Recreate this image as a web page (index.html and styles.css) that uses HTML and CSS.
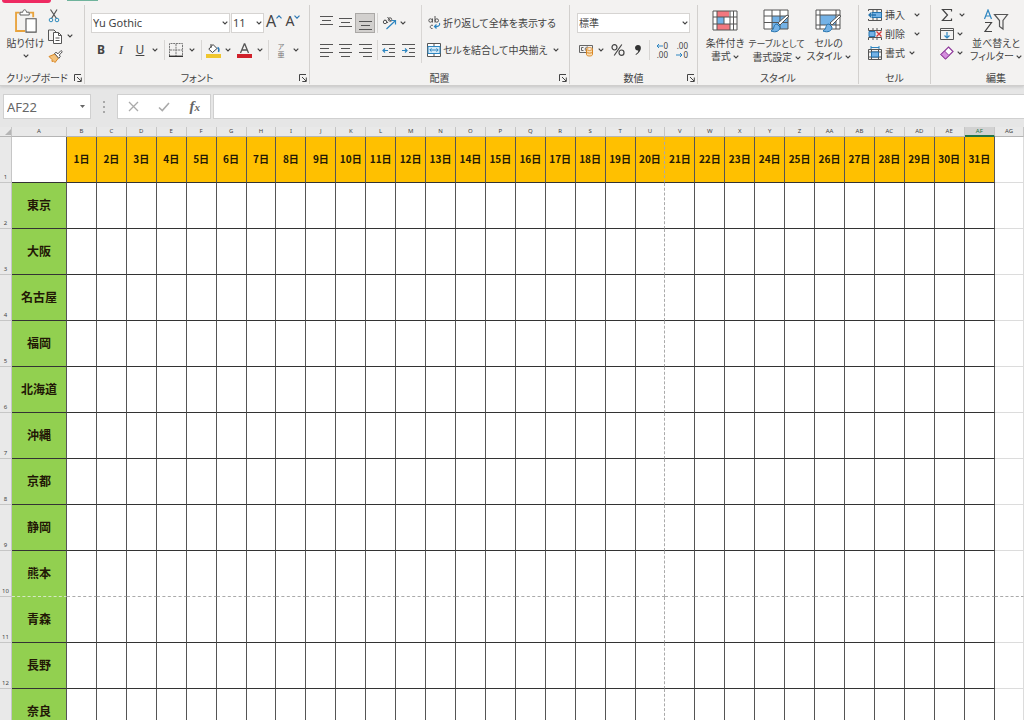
FILE: index.html
```html
<!DOCTYPE html>
<html lang="ja">
<head>
<meta charset="utf-8">
<meta name="viewport" content="width=device-width, initial-scale=1">
<title>スプレッドシート</title>
<link rel="stylesheet" href="styles.css">
</head>
<body>
<svg class="sprite" aria-hidden="true">
  <symbol id="chev" viewBox="0 0 6 4"><path d="M.7.7 3 3 5.300.7" fill="none" stroke="#444" stroke-width="1.2"/></symbol>
  <symbol id="launch" viewBox="0 0 8 8"><path d="M.5 7V.5H7M3 3l4 4M7.300 3.500v4h-4" fill="none" stroke="#444"/></symbol>
</svg>

<header class="ribbon">
  <div class="tabs"><span class="tab-red"></span><span class="tab-green"></span></div>
  <div class="groups">

    <section class="group clipboard">
      <div class="body">
        <button class="big" type="button">
          <svg width="24" height="26" viewBox="0 0 24 26" fill="none"><path d="M5 4H1.200v19.800H11M16 4h3.800v5" stroke="#e8a33d" stroke-width="2"/><path d="M5.500 6.500v-3h3C8.500 0 12.500 0 12.500 3.500h3v3z" fill="#fff" stroke="#555"/><path d="M12 10.500h11V25H12z" fill="#fff" stroke="#555" stroke-width="1.200"/></svg>
          <span class="lines">貼り付け</span>
          <svg class="chev"><use href="#chev"/></svg>
        </button>
        <div class="clip-tools">
          <button type="button" aria-label="切り取り"><svg width="12" height="14" viewBox="0 0 12 14" fill="none"><path d="M2.500.5 8.500 9.500M9 .5 3.500 9.500" stroke="#555" stroke-width="1.200"/><circle cx="3" cy="11" r="1.800" stroke="#2e8bbd"/><circle cx="9" cy="11" r="1.800" stroke="#2e8bbd"/></svg></button>
          <button type="button" aria-label="コピー"><svg width="15" height="15" viewBox="0 0 15 15" fill="none" stroke="#555"><path d="M5 11.500H.5V1H6l2 2"/><path d="M5.500 3.500h5l3 3v8h-8z" fill="#fff"/><path d="M10.500 3.500v3h3M7.500 9h4M7.500 11.500h4"/></svg><svg class="chev"><use href="#chev"/></svg></button>
          <button type="button" aria-label="書式のコピー"><svg width="15" height="13" viewBox="0 0 15 13"><path d="M1 6.500 7 4l3.500 4L7 12.500 5.500 11 4 11.500 4 9.500z" fill="#f3c27c" stroke="#d98723"/><path d="M6.500 3.500 8 2.300l2 1.500L13 .5l1.300 1.200-3 3.300 1 1.500-1.500 1.800z" fill="#fff" stroke="#555"/></svg></button>
        </div>
      </div>
      <footer><span>クリップボード</span><button class="launch" type="button" aria-label="クリップボードの設定"><svg width="8" height="8"><use href="#launch"/></svg></button></footer>
    </section>

    <section class="group font">
      <div class="body rows">
        <div class="row font-top">
          <label class="combo"><select aria-label="フォント名"><option>Yu Gothic</option></select><svg class="chev"><use href="#chev"/></svg></label>
          <label class="combo"><select aria-label="フォントサイズ"><option>11</option></select><svg class="chev"><use href="#chev"/></svg></label>
          <button type="button" class="grow" aria-label="拡大">A<svg width="6" height="4" viewBox="0 0 6 4"><path d="M.5 3.300 3 .8l2.500 2.500" fill="none" stroke="#2e79b5" stroke-width="1.200"/></svg></button>
          <button type="button" class="shrink" aria-label="縮小">A<svg width="6" height="4" viewBox="0 0 6 4"><path d="M.5.7 3 3.200 5.500.7" fill="none" stroke="#2e79b5" stroke-width="1.200"/></svg></button>
        </div>
        <div class="row font-tools">
          <button type="button"><b>B</b></button>
          <button type="button"><i>I</i></button>
          <button type="button"><u>U</u></button>
          <button type="button" aria-label="下線"><svg class="chev"><use href="#chev"/></svg></button>
          <span class="sep"></span>
          <button type="button" aria-label="罫線"><svg width="14" height="14" viewBox="0 0 14 14" fill="none"><path d="M.5 13V.5h13V13M7 1v12M1 7h12" stroke="#777" stroke-dasharray="2 .7"/><path d="M0 13.300h14" stroke="#333" stroke-width="1.400"/></svg></button>
          <button type="button" aria-label="罫線の種類"><svg class="chev"><use href="#chev"/></svg></button>
          <span class="sep"></span>
          <button type="button" aria-label="塗りつぶし"><svg width="15" height="15" viewBox="0 0 15 15"><path d="M7 1.500 11 5.500 6.500 9.500 2.800 6.200zM5 1v4" fill="#fff" stroke="#444"/><path d="M11.500 4.500c2 1 1.500 3 1 4.500" fill="none" stroke="#2e79b5" stroke-width="1.500"/><path d="M0 11h15v4H0z" fill="#efc62e"/></svg></button>
          <button type="button" aria-label="塗りつぶしの色"><svg class="chev"><use href="#chev"/></svg></button>
          <button type="button" aria-label="フォントの色"><svg width="15" height="15" viewBox="0 0 15 15"><path d="M3.500 10 7.300 1h.5l3.700 9M5 7h5" fill="none" stroke="#555" stroke-width="1.300"/><path d="M0 11h15v4H0z" fill="#d0202a"/></svg></button>
          <button type="button" aria-label="文字の色"><svg class="chev"><use href="#chev"/></svg></button>
          <span class="sep"></span>
          <button type="button" class="ruby"><span>ア</span><span>亜</span></button>
          <button type="button" aria-label="ふりがな"><svg class="chev"><use href="#chev"/></svg></button>
        </div>
      </div>
      <footer><span>フォント</span><button class="launch" type="button" aria-label="フォントの設定"><svg width="8" height="8"><use href="#launch"/></svg></button></footer>
    </section>

    <section class="group align">
      <div class="body">
        <div class="align-left rows">
          <div class="row align-top">
            <button type="button" aria-label="上揃え"><svg width="13" height="14" viewBox="0 0 13 14" stroke="#555"><path d="M0 .5h13M2 4.500h9M0 8.500h13"/></svg></button>
            <button type="button" aria-label="中央揃え(縦)"><svg width="13" height="14" viewBox="0 0 13 14" stroke="#555"><path d="M0 2.500h13M2 6.500h9M0 10.500h13"/></svg></button>
            <button type="button" class="on" aria-label="下揃え" aria-pressed="true"><svg width="13" height="14" viewBox="0 0 13 14" stroke="#555"><path d="M0 5.500h13M2 9.500h9M0 13.500h13"/></svg></button>
            <span class="sep"></span>
            <button type="button" aria-label="方向"><svg width="15" height="14" viewBox="0 0 15 14" fill="none"><g stroke="#555"><circle cx="3" cy="6" r="1.700"/><path d="M3 3.500l3 3.500M5.500 1l3.500 4.500"/><circle cx="8" cy="3.500" r="1.700"/></g><path d="M4.500 13 13 5M9.500 4.500h4v4" stroke="#2e86c1" stroke-width="1.200"/></svg></button>
            <button type="button" aria-label="方向の種類"><svg class="chev"><use href="#chev"/></svg></button>
          </div>
          <div class="row align-bottom">
            <button type="button" aria-label="左揃え"><svg width="13" height="13" viewBox="0 0 13 13" stroke="#555"><path d="M0 .5h13M0 4.500h9M0 8.500h13M0 12.500h9"/></svg></button>
            <button type="button" aria-label="中央揃え"><svg width="13" height="13" viewBox="0 0 13 13" stroke="#555"><path d="M0 .5h13M2 4.500h9M0 8.500h13M2 12.500h9"/></svg></button>
            <button type="button" aria-label="右揃え"><svg width="13" height="13" viewBox="0 0 13 13" stroke="#555"><path d="M0 .5h13M4 4.500h9M0 8.500h13M4 12.500h9"/></svg></button>
            <span class="sep"></span>
            <button type="button" aria-label="インデントを減らす"><svg width="13" height="13" viewBox="0 0 13 13" fill="none" stroke="#555"><path d="M0 .5h13M7 4.500h6M7 8.500h6M0 12.500h13"/><path d="M6 6.500H1M3 4.500l-2 2 2 2" stroke="#2e86c1" stroke-width="1.200"/></svg></button>
            <button type="button" aria-label="インデントを増やす"><svg width="13" height="13" viewBox="0 0 13 13" fill="none" stroke="#555"><path d="M0 .5h13M7 4.500h6M7 8.500h6M0 12.500h13"/><path d="M0 6.500h5M3 4.500l2 2-2 2" stroke="#2e86c1" stroke-width="1.200"/></svg></button>
          </div>
        </div>
        <div class="align-right rows">
          <button type="button" class="wide row"><svg width="14" height="14" viewBox="0 0 14 14" fill="none"><g stroke="#555"><circle cx="3.500" cy="4.500" r="1.700"/><path d="M5.500 2.500v4M8 0v6.500M6 9.500c-3-1.500-4 3.500-.5 3"/><circle cx="9.800" cy="4.500" r="1.700"/></g><path d="M12.500 7c1 3-2 4-5 3.500M9.500 8.500l-2 2 2 2" stroke="#2e86c1" stroke-width="1.200"/></svg><span>折り返して全体を表示する</span></button>
          <button type="button" class="wide row"><svg width="14" height="14" viewBox="0 0 14 14" fill="none"><path d="M.5.5h13v13H.5z" fill="#fff" stroke="#555"/><path d="M1 3.500h12v7H1z" fill="#d6ebf8" stroke="#2e86c1"/><path d="M7 1v2M7 11v2" stroke="#555"/><path d="M3 7h8M4.500 5.300 2.800 7l1.700 1.700M9.500 5.300 11.200 7 9.500 8.700" stroke="#2e86c1"/></svg><span>セルを結合して中央揃え</span><svg class="chev end"><use href="#chev"/></svg></button>
        </div>
      </div>
      <footer><span>配置</span><button class="launch" type="button" aria-label="配置の設定"><svg width="8" height="8"><use href="#launch"/></svg></button></footer>
    </section>

    <section class="group number">
      <div class="body rows">
        <div class="row"><label class="combo full"><select aria-label="表示形式"><option>標準</option></select><svg class="chev"><use href="#chev"/></svg></label></div>
        <div class="row number-tools">
          <button type="button" aria-label="通貨"><svg width="15" height="14" viewBox="0 0 15 14" fill="none"><path d="M.5 2.500h13v7H.5z" stroke="#666"/><path d="M4.500 4.500h-2v3h2M9 4C5.500 3.500 5.500 8 8 8" stroke="#666"/><path d="M7.500 6v5.500c0 2 6 2 6 0V6" fill="#f9ddb3" stroke="#d98723"/><ellipse cx="10.500" cy="6" rx="3" ry="1.300" fill="#fff" stroke="#d98723"/><path d="M7.500 9c1 1.500 5 1.500 6 0" stroke="#d98723"/></svg></button>
          <button type="button" aria-label="通貨の種類"><svg class="chev"><use href="#chev"/></svg></button>
          <button type="button" aria-label="パーセント"><svg width="14" height="12" viewBox="0 0 14 12" fill="none" stroke="#444" stroke-width="1.200"><ellipse cx="3.500" cy="3.300" rx="2.500" ry="2.700"/><ellipse cx="10.500" cy="8.700" rx="2.500" ry="2.700"/><path d="M10.800.5 3.200 11.500"/></svg></button>
          <button type="button" aria-label="桁区切り"><svg width="8" height="12" viewBox="0 0 8 12"><path d="M4 1c4 0 4.300 6-2 10l-.5-.7C3.500 9 4.300 8 4.300 6.600 0 7 0 1 4 1z" fill="#333"/></svg></button>
          <span class="sep"></span>
          <button type="button" class="dec"><span><svg width="7" height="6" viewBox="0 0 7 6"><path d="M7 3H1M3 1 1 3l2 2" fill="none" stroke="#2e86c1"/></svg>0</span><span>.00</span></button>
          <button type="button" class="dec"><span>.00</span><span><svg width="7" height="6" viewBox="0 0 7 6"><path d="M0 3h6M4 1l2 2-2 2" fill="none" stroke="#2e86c1"/></svg>0</span></button>
        </div>
      </div>
      <footer><span>数値</span><button class="launch" type="button" aria-label="数値の設定"><svg width="8" height="8"><use href="#launch"/></svg></button></footer>
    </section>

    <section class="group styles">
      <div class="body">
        <button class="big" type="button">
          <svg width="26" height="22" viewBox="0 0 26 22" fill="none"><path d="M1 1h24v19H1z" fill="#fff"/><path d="M5 1h12v6H5zM5 14h13v6H5z" fill="#f2777f"/><path d="M5 7h7v7H5z" fill="#74b2e6"/><path d="M1 1h24v19H1zM1 7h24M1 14h24M5 1v19M12 7v7M18 1v19M21.500 1v19" stroke="#555"/></svg>
          <span class="lines">条件付き<br>書式 <svg class="chev"><use href="#chev"/></svg></span>
        </button>
        <button class="big" type="button">
          <svg width="27" height="24" viewBox="0 0 27 24" fill="none"><path d="M1 1h24v19H1z" fill="#fff"/><path d="M9 7h16v13H9z" fill="#74b2e6"/><path d="M1 1h24v19H1zM1 7h24M1 13.500h24M9 1v19M17 1v19" stroke="#555"/><path d="M26 7 17 16l-2-2L24 6z" fill="#fff" stroke="#555"/><path d="M14 15c-4 0-2 5-6 7 5 2 9 0 9-4z" fill="#74b2e6" stroke="#2472ad"/></svg>
          <span class="lines"><span class="small">テーブルとして</span><br>書式設定 <svg class="chev"><use href="#chev"/></svg></span>
        </button>
        <button class="big" type="button">
          <svg width="27" height="24" viewBox="0 0 27 24" fill="none"><path d="M1 1h24v19H1z" fill="#fff"/><path d="M5 6h16v10H5z" fill="#74b2e6"/><path d="M1 1h24v19H1zM1 6h24M1 16h24M5 1v19M21 1v19" stroke="#555"/><path d="M26 7 17 16l-2-2L24 6z" fill="#fff" stroke="#555"/><path d="M14 15c-4 0-2 5-6 7 5 2 9 0 9-4z" fill="#74b2e6" stroke="#2472ad"/></svg>
          <span class="lines">セルの<br>スタイル <svg class="chev"><use href="#chev"/></svg></span>
        </button>
      </div>
      <footer><span>スタイル</span></footer>
    </section>

    <section class="group cells">
      <div class="body stack">
        <button type="button"><svg width="14" height="14" viewBox="0 0 14 14" fill="none"><path d="M.5 1.500h13v11H.5zM5 1.500v11M9 1.500v11M.5 4.500h13M.5 9.500h13" stroke="#555"/><path d="M4 4.500h9.500v5H4z" fill="#74b2e6" stroke="#2472ad"/><path d="M0 3h4v8H0z" fill="#f3f2f1"/><path d="M8 7H1M3.500 4.500 1 7l2.500 2.500" stroke="#2472ad" stroke-width="1.300"/></svg><span>挿入</span><svg class="chev"><use href="#chev"/></svg></button>
        <button type="button"><svg width="14" height="14" viewBox="0 0 14 14" fill="none"><path d="M.5 1v2.500h13V1M.5 13v-2.500h13V13M5 1v2.500M9 1v2.500M5 10.500V13M9 10.500V13" stroke="#555"/><path d="M1 4.500h6v5H1z" fill="#74b2e6" stroke="#2472ad"/><path d="M8.500 4.500l5 5M13.500 4.500l-5 5" stroke="#d83b3b" stroke-width="1.300"/></svg><span>削除</span><svg class="chev"><use href="#chev"/></svg></button>
        <button type="button"><svg width="14" height="14" viewBox="0 0 14 14" fill="none"><path d="M.5 3.500h13v10H.5zM.5 6h13M.5 11h13M3.500 3.500v10M10.500 3.500v10" stroke="#555"/><path d="M3.500 6h7v5h-7z" fill="#74b2e6" stroke="#2472ad"/><path d="M3 1.500h8M3 0v3M11 0v3" stroke="#2e86c1"/></svg><span>書式</span><svg class="chev near"><use href="#chev"/></svg></button>
      </div>
      <footer><span>セル</span></footer>
    </section>

    <section class="group edit">
      <div class="body">
        <div class="stack">
          <button type="button" aria-label="合計"><svg width="14" height="14" viewBox="0 0 14 14" fill="none"><path d="M11.500 3.500v-2h-9L7.500 7l-5 5.500h9v-2" stroke="#444" stroke-width="1.200"/></svg><svg class="chev far"><use href="#chev"/></svg></button>
          <button type="button" aria-label="フィル"><svg width="14" height="14" viewBox="0 0 14 14" fill="none"><path d="M.5 1.500h13v11H.5zM.5 3.500h13" stroke="#555"/><path d="M7 5v6M4.500 8.500 7 11l2.500-2.500" stroke="#2e86c1" stroke-width="1.200"/></svg><svg class="chev"><use href="#chev"/></svg></button>
          <button type="button" aria-label="クリア"><svg width="14" height="14" viewBox="0 0 14 14"><path d="M8.500 1 13 5.500 5.500 13 1 8.500z" fill="#fff" stroke="#8f3a9b" stroke-width="1.200"/><path d="M4.500 5 9 9.500 5.500 13 1 8.500z" fill="#d58ede" stroke="#8f3a9b"/></svg><svg class="chev"><use href="#chev"/></svg></button>
        </div>
        <button class="big" type="button">
          <svg width="26" height="24" viewBox="0 0 26 24" fill="none"><path d="M1.500 10 5 1l3.500 9M2.700 7h4.600" stroke="#2e86c1" stroke-width="1.200"/><path d="M2 13.500h6.500L2 22.500h7" stroke="#444" stroke-width="1.200"/><path d="M11.500 5.500h13L20 11.500V20l-3.500-2.500v-6z" stroke="#555" stroke-width="1.200"/></svg>
          <span class="lines">並べ替えと<br>フィルター <svg class="chev"><use href="#chev"/></svg></span>
        </button>
      </div>
      <footer><span>編集</span></footer>
    </section>
  </div>
</header>

<div class="formula">
  <label class="namebox"><input type="text" value="AF22" aria-label="名前ボックス"><svg width="5" height="3" viewBox="0 0 5 3"><path d="M0 0h5L2.500 3z" fill="#666"/></svg></label>
  <span class="dots"><i></i><i></i><i></i></span>
  <div class="fx">
    <button type="button" aria-label="キャンセル"><svg width="11" height="11" viewBox="0 0 11 11"><path d="M1 1l9 9M10 1l-9 9" stroke="#aaa" stroke-width="1.300"/></svg></button>
    <button type="button" aria-label="入力"><svg width="12" height="10" viewBox="0 0 12 10"><path d="M1 5.500 4.300 8.500 11 1" fill="none" stroke="#aaa" stroke-width="1.600"/></svg></button>
    <button type="button" class="fn">f<small>x</small></button>
  </div>
  <input class="formula-input" type="text" aria-label="数式バー">
</div>

<main>
  <table class="sheet">
    <colgroup id="cols"><col class="c-head"><col class="c-a"></colgroup>
    <thead><tr id="letters"><th class="corner"><svg width="6" height="6" viewBox="0 0 6 6"><path d="M6 0v6H0z" fill="#b5b5b5"/></svg></th></tr></thead>
    <tbody id="rows"></tbody>
  </table>
</main>
<script src="script.js"></script>
</body>
</html>
```

FILE: styles.css
```css
* { box-sizing: border-box; }

body {
  margin: 0;
  height: 100vh;
  overflow: hidden;
  background: #e6e6e6;
  color: #444;
  font: 10px/13px "Noto Sans", "Noto Sans CJK JP", sans-serif;
}

svg { display: block; flex: none; }
.sprite { position: absolute; width: 0; height: 0; }
.chev { width: 6px; height: 4px; }

button, input, select {
  font: inherit;
  color: inherit;
  border: 0;
  padding: 0;
  margin: 0;
  background: none;
  border-radius: 0;
}

button {
  display: flex;
  align-items: center;
  justify-content: center;
  white-space: nowrap;
}

/* Ribbon */
.ribbon {
  background: #f3f2f1;
  border-bottom: 1px solid #cfcecd;
  box-shadow: 0 1px 3px #c4c4c4;
  overflow: hidden;
  font-family: "Noto Sans CJK JP", sans-serif;
  font-feature-settings: "palt";
}

.tabs { display: flex; gap: 16px; height: 5px; padding-left: 2px; }
.tab-red { width: 49px; height: 3px; background: #ee2a62; border-radius: 0 0 4px 4px; }
.tab-green { width: 31px; height: 1px; background: #6fb39c; }

.groups { display: flex; }

.group {
  flex: none;
  display: flex;
  flex-direction: column;
  height: 79px;
  border-right: 1px solid #d2d0ce;
  margin-bottom: 1px;
}

.clipboard { width: 85px; }
.font { width: 225px; }
.align { width: 260px; }
.number { width: 128px; }
.styles { width: 161px; }
.cells { width: 72px; }
.edit { width: 130px; border-right: 0; }

.body { flex: 1; display: flex; }

.group footer {
  display: grid;
  height: 13px;
  align-items: center;
  justify-items: center;
}
.group footer > * { grid-area: 1 / 1; }
.group footer .launch { justify-self: end; margin-right: 2px; }
.clipboard footer > span { margin-right: 10px; }

.rows { flex-direction: column; padding-top: 8px; gap: 8px; }
.row { display: grid; height: 19px; align-items: center; }
.sep { width: 1px; height: 20px; background: #d8d6d4; justify-self: center; }

.big { flex-direction: column; justify-content: flex-start; padding-top: 4px; }
.big > svg:first-child { height: 24px; margin-bottom: 3px; }
.big .lines { text-align: center; }
.lines .small { font-size: 9px; }
.lines .chev { display: inline-block; vertical-align: middle; }

.clipboard .body { padding-left: 7px; }
.clipboard .big { width: 37px; }
.clipboard .big > .chev { margin-top: 5px; }
.clip-tools { display: grid; grid-template-rows: 20px 20px 20px; padding: 1px 0 0 4px; align-items: center; align-content: start; }
.clip-tools button { justify-content: flex-start; gap: 4px; }

.combo {
  display: grid;
  align-items: center;
  height: 20px;
  background: #fff;
  border: 1px solid #d6d4d2;
}
.combo > * { grid-area: 1 / 1; }
.combo select { appearance: none; width: 100%; height: 18px; padding-left: 1px; outline: 0; font-family: "Noto Sans", "Noto Sans CJK JP", sans-serif; font-size: 11px; line-height: 18px; }
.combo .chev { justify-self: end; margin-right: 1px; pointer-events: none; }
.number .combo select { font-size: 10px; }

.font .body { padding-left: 6px; }
.font-top { grid-template-columns: 139px 33px 18px 18px; column-gap: 1px; }
.grow, .shrink { align-self: start; align-items: flex-start; font: 16px/16px "Noto Sans", sans-serif; }
.shrink { font-size: 14px; }
.grow svg, .shrink svg { margin-top: 2px; }
.font-tools { grid-template-columns: 20px 20px 18px 12px 7px 16px 16px 3px 20px 10px 22px 10px 7px 18px 12px; }
.font-tools b, .font-tools i, .font-tools u { font: bold 12px/16px "Noto Sans", sans-serif; }
.font-tools i { font: italic 13px/16px "Liberation Serif", serif; }
.font-tools u { font-weight: 400; }
.ruby { flex-direction: column; font-size: 7px; line-height: 8px; color: #777; }

.align-left { display: flex; width: 112px; padding-left: 6px; border-right: 1px solid #d8d6d4; height: 58px; }
.align-top { grid-template-columns: 20px 19px 20px 4px 20px 8px; }
.align-bottom { grid-template-columns: 20px 19px 20px 4px 19px 20px; }
.on { height: 20px; background: #d2d0ce; outline: 1px solid #aaa8a6; outline-offset: -1px; }
.align-right { display: flex; flex: 1; padding-left: 5px; }
.wide { display: flex; justify-content: flex-start; gap: 2px; }
.wide .end { margin-left: auto; margin-right: 10px; }

.number .body { padding: 8px 7px 0; }
.number-tools { grid-template-columns: 18px 12px 22px 18px 5px 19px 20px; }
.dec { flex-direction: column; align-items: flex-end; font: 8px/9px "Noto Sans", sans-serif; padding-right: 3px; }
.dec span { display: flex; align-items: center; }

.styles .body { display: grid; grid-template-columns: 50px 53px 51px; padding-left: 2px; }

.stack { display: flex; flex-direction: column; }
.stack button { height: 19px; gap: 3px; justify-content: flex-start; }
.cells .body { padding-left: 9px; }
.stack .chev { margin-left: 6px; }
.cells .near { margin-left: 1px; }
.edit .stack { width: 39px; padding-left: 9px; }
.edit .stack .chev { margin-left: 0; }
.edit .stack .far { margin-left: 2px; }

/* Formula bar */
.formula {
  display: grid;
  grid-template-columns: 88px 26px 94px 1fr;
  height: 41px;
  padding: 8px 0 8px 3px;
}
.namebox, .fx { display: flex; align-items: center; background: #fff; border: 1px solid #d0d0d0; }
.namebox { padding-right: 5px; }
.namebox input { flex: 1; min-width: 0; height: 22px; padding-left: 3px; font-size: 13px; color: #666; outline: 0; }
.dots { display: grid; align-content: center; justify-content: center; gap: 3px; }
.dots i { width: 2px; height: 2px; background: #a8a8a8; }
.fx { justify-content: space-around; }
.fx button { width: 26px; }
.fn { align-items: baseline; font: italic bold 15px/20px "Liberation Serif", serif; color: #666; }
.fn small { font-size: 11px; }
.formula-input { margin-left: 2px; padding: 0 6px; background: #fff; border: 1px solid #d0d0d0; border-right: 0; }

/* Sheet */
.sheet { width: 100%; table-layout: fixed; border-collapse: separate; border-spacing: 0; background: #fff; }
.sheet th, .sheet td { padding: 0; overflow: hidden; white-space: nowrap; text-align: center; }
.c-head { width: 12px; }
.c-a { width: 55px; }
.c-last { width: 29px; }

.sheet thead th {
  height: 10px;
  background: #e9e9e9;
  border-right: 1px solid #c6c6c6;
  border-bottom: 1px solid #b5b5b5;
  font-size: 6px;
  line-height: 9px;
  font-weight: 400;
}
.sheet thead .corner svg { margin-left: 5px; }
.sheet thead .current { background: #d2d2d2; color: #217346; border-bottom: 2px solid #217346; line-height: 8px; }

.sheet tbody tr { height: 46px; }
.sheet .num {
  background: #e9e9e9;
  border-right: 1px solid #c6c6c6;
  border-bottom: 1px solid #c6c6c6;
  font-size: 6px;
  line-height: 9px;
  font-weight: 400;
  vertical-align: bottom;
}
.sheet .cell { padding-bottom: 2px; border-right: 1px solid #555; border-bottom: 1px solid #333; color: #221806; font-family: "Noto Sans CJK JP", sans-serif; }
.sheet .day { background: #ffc000; font-size: 10px; line-height: 16px; font-weight: 700; }
.sheet .city { background: #92d050; font-size: 12px; line-height: 16px; font-weight: 700; }
.sheet .outside { border-right: 1px solid #dcdcdc; border-bottom: 1px solid #dcdcdc; }
.sheet .break-right { border-right: 1px dashed #aaa; }
.sheet .break-bottom td { border-bottom: 1px dashed #aaa; }
.sheet .break-bottom .city { border-bottom: 1px dashed #d5e8c4; }
```

FILE: script.js
```javascript
const DAYS = 31;
const PAGE_BREAK_DAY = 20;
const PAGE_BREAK_ROW = 10;
const cities = ["東京", "大阪", "名古屋", "福岡", "北海道", "沖縄", "京都", "静岡", "熊本", "青森", "長野", "奈良"];

function letter(n) {
  return (n >= 26 ? "A" : "") + String.fromCharCode(65 + (n % 26));
}

function add(parent, tag, className, text) {
  const node = document.createElement(tag);
  if (className) node.className = className;
  if (text) node.textContent = text;
  parent.appendChild(node);
  return node;
}

const cols = document.getElementById("cols");
const letters = document.getElementById("letters");
const rows = document.getElementById("rows");

for (let d = 1; d <= DAYS; d++) add(cols, "col");
add(cols, "col", "c-last");

for (let c = 0; c <= DAYS + 1; c++) {
  add(letters, "th", c === DAYS ? "current" : "", letter(c)).scope = "col";
}

for (let r = 1; r <= cities.length + 1; r++) {
  const row = add(rows, "tr", r === PAGE_BREAK_ROW ? "break-bottom" : "");
  add(row, "th", "num", String(r)).scope = "row";
  if (r === 1) add(row, "td", "cell");
  else add(row, "th", "cell city", cities[r - 2]).scope = "row";
  for (let d = 1; d <= DAYS; d++) {
    const edge = d === PAGE_BREAK_DAY ? " break-right" : "";
    if (r === 1) add(row, "th", "cell day" + edge, d + "日");
    else add(row, "td", "cell" + edge);
  }
  add(row, "td", "outside");
}
```
